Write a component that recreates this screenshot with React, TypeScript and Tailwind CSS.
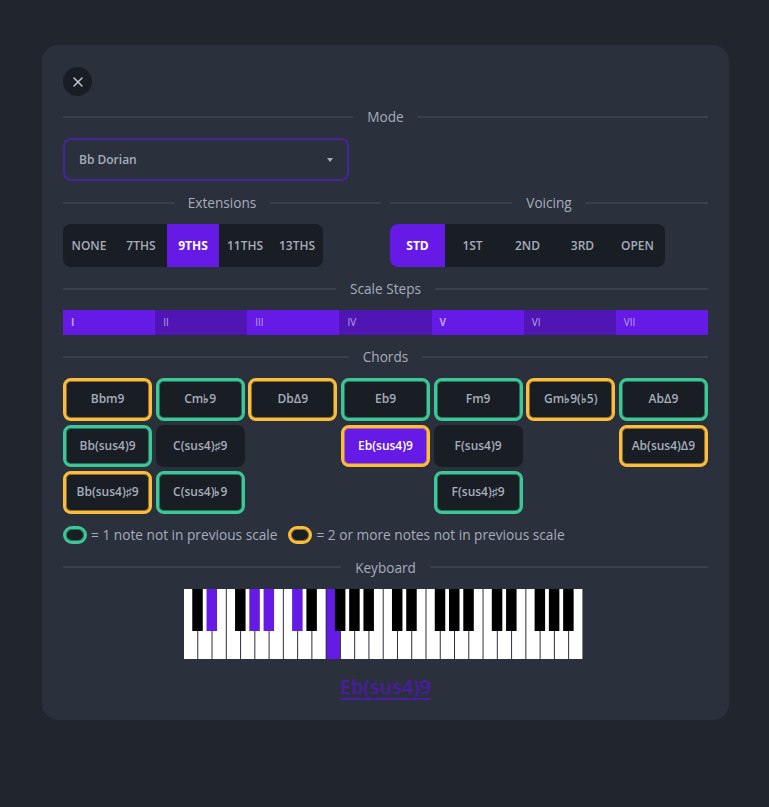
import { X } from 'lucide-react';

const green = 'border-[3px] border-[#3cc796] shadow-[inset_0_0_0_1px_rgba(60,199,150,0.5)]';
const yellow = 'border-[3px] border-[#fbbd3a] shadow-[inset_0_0_0_1px_rgba(251,189,58,0.5)]';

const extensions = ['NONE', '7THS', '9THS', '11THS', '13THS'];
const voicings = ['STD', '1ST', '2ND', '3RD', 'OPEN'];
const steps = ['I', 'II', 'III', 'IV', 'V', 'VI', 'VII'];

type Chord = { name: string; color?: 'g' | 'y'; active?: boolean } | null;

const chords: Chord[] = [
  { name: 'Bbm9', color: 'y' },
  { name: 'Cm♭9', color: 'g' },
  { name: 'DbΔ9', color: 'y' },
  { name: 'Eb9', color: 'g' },
  { name: 'Fm9', color: 'g' },
  { name: 'Gm♭9(♭5)', color: 'y' },
  { name: 'AbΔ9', color: 'g' },
  { name: 'Bb(sus4)9', color: 'g' },
  { name: 'C(sus4)♯9' },
  null,
  { name: 'Eb(sus4)9', color: 'y', active: true },
  { name: 'F(sus4)9' },
  null,
  { name: 'Ab(sus4)Δ9', color: 'y' },
  { name: 'Bb(sus4)♯9', color: 'y' },
  { name: 'C(sus4)♭9', color: 'g' },
  null,
  null,
  { name: 'F(sus4)♯9', color: 'g' },
  null,
  null,
];

// white key index that has a black key to its right
const blackAfter = [0, 1, 3, 4, 5, 7, 8, 10, 11, 12, 14, 15, 17, 18, 19, 21, 22, 24, 25, 26];
const purpleBlack = [1, 4, 5, 7];
const purpleWhite = [10];

function Divider({ label }: { label: string }) {
  return (
    <div className="flex items-center gap-[14px] h-[21px] text-[13.6px] text-[#a6adbb]">
      <div className="flex-1 h-[2px] bg-[#3b414c]" />
      <span className="pt-[2px]">{label}</span>
      <div className="flex-1 h-[2px] bg-[#3b414c]" />
    </div>
  );
}

function Keyboard() {
  const w = 399.4 / 28;
  return (
    <svg width="400" height="70" viewBox="0 0 400 70" className="block">
      {Array.from({ length: 28 }).map((_, i) => (
        <rect key={i} x={i * w} y="0" width={w - 1} height="70" fill={purpleWhite.includes(i) ? '#661ae6' : '#ffffff'} />
      ))}
      {blackAfter.map(i => (
        <rect
          key={i}
          x={(i + 1) * w - 6}
          y="0"
          width="10.5"
          height="42"
          fill={purpleBlack.includes(i) ? '#661ae6' : '#000000'}
        />
      ))}
    </svg>
  );
}

export default function App() {
  return (
    <div className="min-h-[807px] bg-[#20252e] pt-[45px] font-['Open_Sans',sans-serif]">
      <div className="mx-[42px] w-[687px] h-[675px] rounded-2xl bg-[#2a303c] px-[21px] pt-[22px]">
        <button className="w-[29px] h-[29px] rounded-full bg-[#191d24] flex items-center justify-center text-[#c4c9d2]">
          <X size={16} strokeWidth={2} />
        </button>

        <div className="mt-[10px]">
          <Divider label="Mode" />
        </div>

        <div className="mt-[11px] w-[286px] h-[43px] rounded-lg border-2 border-[#47249a] flex items-center justify-between pl-[14px] pr-[14px]">
          <span className="text-[12px] font-semibold text-[#a6adbb]">Bb Dorian</span>
          <span className="w-0 h-0 border-x-[3.5px] border-x-transparent border-t-[4px] border-t-[#a6adbb]" />
        </div>

        <div className="mt-[11px] grid grid-cols-2 gap-x-[9px]">
          <div>
            <Divider label="Extensions" />
            <div className="mt-[11px] flex w-[260px] h-[43px] rounded-lg bg-[#191d24] overflow-hidden">
              {extensions.map(e => (
                <div
                  key={e}
                  className={
                    e === '9THS'
                      ? 'flex-1 flex items-center justify-center text-[12px] font-bold bg-[#661ae6] text-white'
                      : 'flex-1 flex items-center justify-center text-[12px] font-semibold text-[#a6adbb]'
                  }
                >
                  {e}
                </div>
              ))}
            </div>
          </div>
          <div>
            <Divider label="Voicing" />
            <div className="mt-[11px] flex w-[275px] h-[43px] rounded-lg bg-[#191d24] overflow-hidden">
              {voicings.map(v => (
                <div
                  key={v}
                  className={
                    v === 'STD'
                      ? 'flex-1 flex items-center justify-center text-[12px] font-bold bg-[#661ae6] text-white'
                      : 'flex-1 flex items-center justify-center text-[12px] font-semibold text-[#a6adbb]'
                  }
                >
                  {v}
                </div>
              ))}
            </div>
          </div>
        </div>

        <div className="mt-[11px]">
          <Divider label="Scale Steps" />
        </div>

        <div className="mt-[11px] grid grid-cols-7 h-[25px]">
          {steps.map((s, i) => (
            <div
              key={s}
              className={
                (i % 2 === 0 ? 'bg-[#661ae6]' : 'bg-[#5016b4]') +
                ' flex items-center pl-[8px] text-[10px] text-[#bda2f2]' +
                (s === 'I' || s === 'V' ? ' font-bold' : '')
              }
            >
              {s}
            </div>
          ))}
        </div>

        <div className="mt-[11px]">
          <Divider label="Chords" />
        </div>

        <div className="mt-[11px] grid grid-cols-7 gap-x-[3.5px] gap-y-[4px] auto-rows-[42.5px]">
          {chords.map((c, i) =>
            c ? (
              <div
                key={i}
                className={
                  'flex items-center justify-center rounded-lg text-[12px] font-semibold whitespace-nowrap ' +
                  (c.active ? 'bg-[#661ae6] text-white font-bold ' : 'bg-[#191d24] text-[#a6adbb] ') +
                  (c.color === 'g' ? green : c.color === 'y' ? yellow : '')
                }
              >
                {c.name}
              </div>
            ) : (
              <div key={i} />
            ),
          )}
        </div>

        <div className="mt-[9px] flex items-center h-[24px] text-[13.7px] text-[#a6adbb]">
          <span className={'w-[24px] h-[18px] rounded-full bg-[#191d24] ' + green} />
          <span className="ml-[4px] pt-[2px]">= 1 note not in previous scale</span>
          <span className={'ml-[11px] w-[24px] h-[18px] rounded-full bg-[#191d24] ' + yellow} />
          <span className="ml-[4px] pt-[2px]">= 2 or more notes not in previous scale</span>
        </div>

        <div className="mt-[10px]">
          <Divider label="Keyboard" />
        </div>

        <div className="mt-[11px] ml-[121px]">
          <Keyboard />
        </div>

        <div className="mt-[14px] flex justify-center">
          <span className="text-[20px] leading-[28px] font-semibold text-[#4a1ca6] underline underline-offset-[4px]">Eb(sus4)9</span>
        </div>
      </div>
    </div>
  );
}
